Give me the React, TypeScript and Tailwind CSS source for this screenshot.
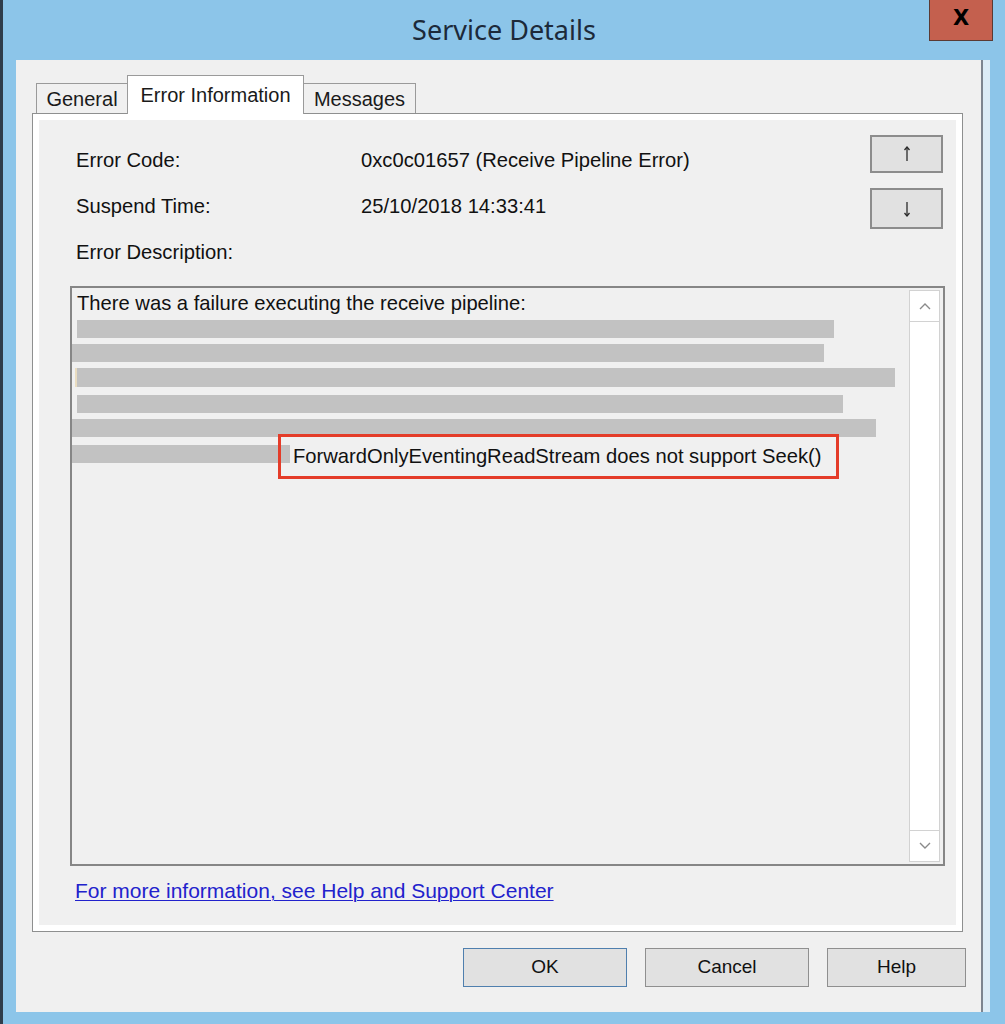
import React from "react";

const sans = "font-['Liberation_Sans',Arial,sans-serif]";

function Chevron({ up }: { up?: boolean }) {
  return (
    <svg width="12" height="8" viewBox="0 0 12 8" fill="none" stroke="#8a8a8a" strokeWidth="1.4">
      {up ? <polyline points="1,7 6,2 11,7" /> : <polyline points="1,1 6,6 11,1" />}
    </svg>
  );
}

function Arrow({ up }: { up?: boolean }) {
  return (
    <svg width="8" height="16" viewBox="0 0 8 16" fill="none" stroke="#2a2a2a" strokeWidth="1.3">
      <line x1="4" y1="1" x2="4" y2="15" />
      {up ? <polyline points="1.5,4 4,1 6.5,4" /> : <polyline points="1.5,12 4,15 6.5,12" />}
    </svg>
  );
}

function DialogButton({ label, width, primary }: { label: string; width: string; primary?: boolean }) {
  return (
    <button
      className={`${width} flex h-[39px] items-center justify-center border bg-[#e1e1e1] text-[19px] text-[#111] ${
        primary ? "border-[#4f7fae]" : "border-[#8f8f8f]"
      }`}
    >
      {label}
    </button>
  );
}

export default function App() {
  return (
    <div className={`flex h-[1024px] w-[1005px] flex-col overflow-hidden border-l-[3px] border-[#2f3d4b] bg-[#8cc5e9] ${sans}`}>
      {/* title bar */}
      <div className="grid h-[60px] grid-cols-[1fr_auto_1fr]">
        <div />
        <div className="flex items-center font-['Noto_Sans',sans-serif] text-[27px] text-[#1c2a3a]">Service Details</div>
        <div className="flex justify-end pr-[12px]">
          <button className="flex h-[41px] w-[64px] items-center justify-center border border-t-0 border-[#5a3a33] bg-[#c4604e] pb-[2px] font-['DejaVu_Sans',sans-serif] text-[21px] font-bold text-black">
            X
          </button>
        </div>
      </div>

      {/* client area */}
      <div className="mb-[12px] ml-[13px] mr-[15px] flex flex-1">
        <div className="flex flex-1 flex-col border-r-2 border-[#7d8590] bg-[#f0f0f0] pl-[16px] pr-[18px] pt-[15px]">
          {/* tabs */}
          <div className="ml-[4px] flex h-[38px] items-end text-[20px] text-[#1a1a1a]">
            <div className="flex h-[30px] w-[91px] items-center justify-center border-l border-t border-[#9a9a9a]">General</div>
            <div className="relative z-10 -mb-[1px] flex h-[39px] w-[177px] items-center justify-center border-x border-t border-[#9a9a9a] bg-white">
              Error Information
            </div>
            <div className="flex h-[30px] w-[112px] items-center justify-center border-r border-t border-[#9a9a9a]">Messages</div>
          </div>

          {/* tab page */}
          <div className="h-[819px] border border-[#8e8f8f] bg-white p-[6px]">
            <div className="flex h-full flex-col bg-[#f0f0f0] pl-[31px] pt-[17px] text-[20.2px] text-[#111]">
              <div className="flex w-[875px] items-start justify-between">
                <div className="grid grid-cols-[285px_auto] pl-[6px]">
                  <div className="flex h-[46px] items-center">Error Code:</div>
                  <div className="flex h-[46px] items-center">0xc0c01657 (Receive Pipeline Error)</div>
                  <div className="flex h-[46px] items-center">Suspend Time:</div>
                  <div className="flex h-[46px] items-center">25/10/2018 14:33:41</div>
                  <div className="flex h-[46px] items-center">Error Description:</div>
                  <div />
                </div>
                <div className="-mt-[2px] mr-[2px] flex flex-col gap-[15px]">
                  <button className="flex h-[38px] w-[73px] items-center justify-center border-2 border-[#8c8c8c] bg-[#e1e1e1]">
                    <Arrow up />
                  </button>
                  <button className="flex h-[41px] w-[73px] items-center justify-center border-2 border-[#8c8c8c] bg-[#e1e1e1]">
                    <Arrow />
                  </button>
                </div>
              </div>

              {/* description box */}
              <div className="mt-[11px] flex h-[580px] w-[875px] border-2 border-[#868686] bg-[#f0f0f0]">
                <div className="flex-1 pt-[3px] leading-[25px]">
                  <div className="h-[25px] whitespace-nowrap pl-[5px]">There was a failure executing the receive pipeline:</div>
                  <div className="h-[25px] pt-[4px]"><div className="ml-[5px] h-[18px] w-[757px] bg-[#c2c2c2]" /></div>
                  <div className="h-[25px] pt-[3px]"><div className="h-[18px] w-[752px] bg-[#c2c2c2]" /></div>
                  <div className="h-[25px] pt-[2px]"><div className="ml-[3px] h-[19px] w-[820px] border-l-2 border-[#e9dcc0] bg-[#c2c2c2]" /></div>
                  <div className="h-[25px] pt-[4px]"><div className="ml-[5px] h-[18px] w-[766px] bg-[#c2c2c2]" /></div>
                  <div className="h-[25px] pt-[3px]"><div className="h-[18px] w-[804px] bg-[#c2c2c2]" /></div>
                  <div className="flex h-[25px] items-start">
                    <div className="mt-[4px] h-[18px] w-[218px] shrink-0 bg-[#c2c2c2]" />
                    <div className="-ml-[12px] -mt-[7px] flex h-[45px] w-[561px] shrink-0 items-center whitespace-nowrap border-[3px] border-[#e43c29] pl-[12px]">
                      ForwardOnlyEventingReadStream does not support Seek()
                    </div>
                  </div>
                </div>
                {/* scrollbar */}
                <div className="my-[2px] mr-[3px] flex w-[31px] flex-col border border-[#d2d2d2] bg-white">
                  <div className="flex h-[31px] items-center justify-center border-b border-[#d2d2d2]">
                    <Chevron up />
                  </div>
                  <div className="mt-auto flex h-[31px] items-center justify-center border-t border-[#d2d2d2]">
                    <Chevron />
                  </div>
                </div>
              </div>

              <div className="mt-[13px] pl-[5px] text-[21px] leading-[24px]">
                <a className="text-[#2222cc] underline decoration-1 underline-offset-2">For more information, see Help and Support Center</a>
              </div>
            </div>
          </div>

          {/* dialog buttons */}
          <div className="-mr-[3px] mt-[16px] flex justify-end gap-[18px]">
            <DialogButton label="OK" width="w-[164px]" primary />
            <DialogButton label="Cancel" width="w-[164px]" />
            <DialogButton label="Help" width="w-[139px]" />
          </div>
        </div>
        <div className="w-[7px] bg-[#dcecf7]" />
      </div>
    </div>
  );
}
